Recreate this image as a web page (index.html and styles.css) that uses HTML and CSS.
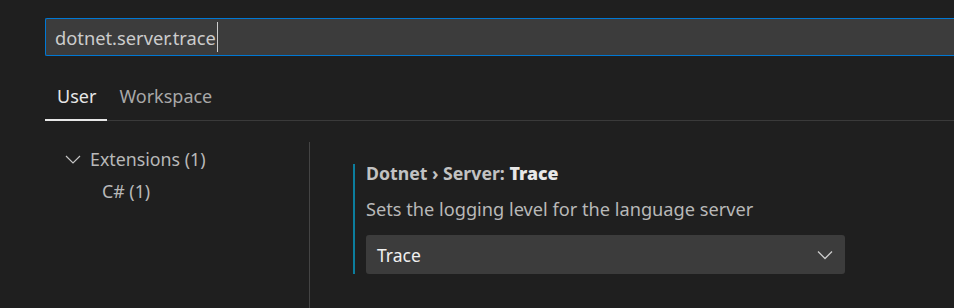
FILE: index.html
```html
<!DOCTYPE html>
<html lang="en">
<head>
  <meta charset="UTF-8">
  <meta name="viewport" content="width=device-width, initial-scale=1.0">
  <title>Settings</title>
  <link rel="stylesheet" href="styles.css">
</head>
<body>
  <div class="editor">
    <div class="search">
      <span class="search-text">dotnet.server.trace</span><span class="caret"></span>
    </div>

    <div class="tabs">
      <div class="tab active">User</div>
      <div class="tab">Workspace</div>
    </div>

    <div class="main">
      <div class="tree">
        <div class="row">
          <svg class="twistie" width="16" height="16" viewBox="0 0 16 16">
            <path d="M1 5 L8 12 L15 5" fill="none" stroke="#c5c5c5" stroke-width="1.2"/>
          </svg>
          <span>Extensions (1)</span>
        </div>
        <div class="row child">C# (1)</div>
      </div>

      <div class="settings">
        <div class="setting">
          <div class="setting-title">Dotnet › Server: <b>Trace</b></div>
          <div class="setting-desc">Sets the logging level for the language server</div>
          <div class="select">
            <span>Trace</span>
            <svg width="16" height="16" viewBox="0 0 16 16">
              <path d="M1 4.5 L8 11.5 L15 4.5" fill="none" stroke="#cccccc" stroke-width="1.3"/>
            </svg>
          </div>
        </div>
      </div>
    </div>
  </div>
</body>
</html>
```

FILE: styles.css
```css
html, body {
  margin: 0;
  height: 100%;
  background: #1f1f1f;
  overflow: hidden;
}
body {
  font-family: "Noto Sans", "Open Sans", sans-serif;
  color: #cccccc;
}
.editor {
  padding-left: 45px;
}
.search {
  margin-top: 18px;
  height: 36px;
  background: #3c3c3c;
  border: 1px solid #0078d4;
  border-right: none;
  border-radius: 2px 0 0 2px;
  display: flex;
  align-items: center;
  padding-left: 9px;
}
.search-text {
  font-size: 18.3px;
  color: #cccccc;
}
.caret {
  width: 1px;
  height: 30px;
  background: #cccccc;
  margin-left: 1px;
}
.tabs {
  display: flex;
  height: 45px;
  margin-top: 19px;
  border-bottom: 1px solid #3a3a3a;
}
.tab {
  padding: 0 12px;
  font-size: 18px;
  line-height: 43px;
  color: #a8a8a8;
}
.tab.active {
  color: #e7e7e7;
  border-bottom: 2px solid #e7e7e7;
  margin-bottom: -1px;
  padding: 0 11px 0 12px;
}
.main {
  display: flex;
  margin-top: 21px;
  height: 166px;
}
.tree {
  width: 264px;
  padding-top: 1px;
}
.row {
  height: 32px;
  display: flex;
  align-items: center;
  font-size: 17.8px;
  color: #b8b8b8;
}
.twistie {
  margin-left: 20px;
  margin-right: 9px;
}
.row.child {
  padding-left: 57px;
}
.settings {
  flex: 1;
  border-left: 1px solid #444444;
}
.setting {
  margin-left: 43px;
  margin-top: 22px;
  border-left: 2px solid #0c7d9d;
  padding-left: 11px;
  width: 479px;
}
.setting-title {
  font-size: 17.7px;
  font-weight: bold;
  line-height: 18px;
  color: #c2c2c2;
}
.setting-title b {
  color: #e7e7e7;
}
.setting-desc {
  font-size: 18.2px;
  line-height: 20px;
  margin-top: 17px;
  color: #b8b8b8;
}
.select {
  margin-top: 16px;
  height: 39px;
  background: #3c3c3c;
  border-radius: 3px;
  display: flex;
  align-items: center;
  justify-content: space-between;
  padding: 0 12px 0 11px;
  font-size: 17.5px;
  color: #f0f0f0;
}
```
